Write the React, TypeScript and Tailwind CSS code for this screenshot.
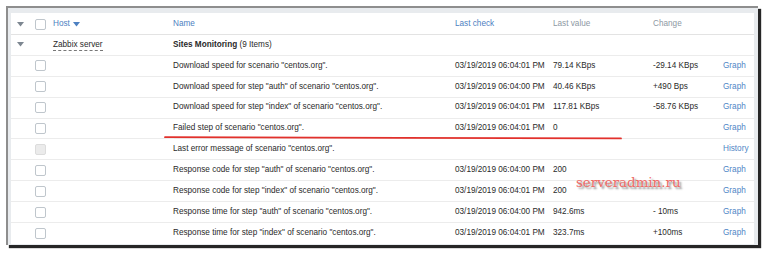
import React from "react";

const rows = [
  { name: 'Download speed for scenario "centos.org".', check: "03/19/2019 06:04:01 PM", value: "79.14 KBps", change: "-29.14 KBps", link: "Graph" },
  { name: 'Download speed for step "auth" of scenario "centos.org".', check: "03/19/2019 06:04:00 PM", value: "40.46 KBps", change: "+490 Bps", link: "Graph" },
  { name: 'Download speed for step "index" of scenario "centos.org".', check: "03/19/2019 06:04:01 PM", value: "117.81 KBps", change: "-58.76 KBps", link: "Graph" },
  { name: 'Failed step of scenario "centos.org".', check: "03/19/2019 06:04:01 PM", value: "0", change: "", link: "Graph" },
  { name: 'Last error message of scenario "centos.org".', check: "", value: "", change: "", link: "History", disabled: true },
  { name: 'Response code for step "auth" of scenario "centos.org".', check: "03/19/2019 06:04:00 PM", value: "200", change: "", link: "Graph" },
  { name: 'Response code for step "index" of scenario "centos.org".', check: "03/19/2019 06:04:01 PM", value: "200", change: "", link: "Graph" },
  { name: 'Response time for step "auth" of scenario "centos.org".', check: "03/19/2019 06:04:00 PM", value: "942.6ms", change: "- 10ms", link: "Graph" },
  { name: 'Response time for step "index" of scenario "centos.org".', check: "03/19/2019 06:04:01 PM", value: "323.7ms", change: "+100ms", link: "Graph" },
];

const grid = "grid grid-cols-[24px_18px_120px_282px_98px_100px_70px_1fr] items-center";

function Tri({ color = "#7d8791" }: { color?: string }) {
  return (
    <svg width="7" height="5" viewBox="0 0 7 5" className="block">
      <path d="M0 0 L7 0 L3.5 4.5 Z" fill={color} />
    </svg>
  );
}

function Box({ disabled }: { disabled?: boolean }) {
  return (
    <div
      className={`w-[11px] h-[11px] rounded-[2px] border ${
        disabled ? "bg-[#ebebeb] border-[#dcdcdc]" : "bg-white border-[#bfc6cc]"
      }`}
    />
  );
}

export default function App() {
  return (
    <div className="w-[768px] h-[255px] bg-white relative overflow-hidden font-['Liberation_Sans',Arial,sans-serif] text-[8.2px] text-[#2a2a2a]">
      <div className="ml-[6px] mt-[6px] w-[752px] border-l-[2px] border-t-[2px] border-[#8e8e8e] bg-[#e8ebee] pl-[3px] pt-[5px] pr-[4px] pb-[1px] shadow-[3px_3px_1px_rgba(0,0,0,0.85)]">
        <div className="bg-white">
          {/* header */}
          <div className={`${grid} h-[22px] pt-[2px] border-b border-[#e3e3e3]`}>
            <div className="pl-[6px]"><Tri /></div>
            <div><Box /></div>
            <div className="flex items-center gap-[3px] text-[#4d80c1]">
              <span>Host</span>
              <Tri color="#4d80c1" />
            </div>
            <div className="text-[#4d80c1]">Name</div>
            <div className="text-[#4d80c1]">Last check</div>
            <div className="text-[#8d98a3]">Last value</div>
            <div className="text-[#8d98a3]">Change</div>
            <div />
          </div>
          {/* group row */}
          <div className={`${grid} h-[20.9px] border-b border-[#ececec]`}>
            <div className="pl-[6px]"><Tri /></div>
            <div />
            <div>
              <span className="border-b border-dashed border-[#777] leading-[10px] inline-block">Zabbix server</span>
            </div>
            <div>
              <span className="font-bold">Sites Monitoring</span> (9 Items)
            </div>
            <div />
            <div />
            <div />
            <div />
          </div>
          {rows.map((r, i) => (
            <div
              key={i}
              className={`${grid} h-[20.9px] ${i < rows.length - 1 ? "border-b border-[#ececec]" : ""}`}
            >
              <div />
              <div><Box disabled={r.disabled} /></div>
              <div />
              <div className="whitespace-nowrap">{r.name}</div>
              <div className="whitespace-nowrap">{r.check}</div>
              <div className="whitespace-nowrap">{r.value}</div>
              <div className="whitespace-nowrap">{r.change}</div>
              <div className="text-[#4f86c6]">{r.link}</div>
            </div>
          ))}
        </div>
      </div>

      {/* red annotation line */}
      <svg className="absolute left-0 top-0 pointer-events-none" width="768" height="255">
        <path d="M165 137.2 L400 137.8 L621 138.4" stroke="#e2312c" strokeWidth="1.8" fill="none" strokeLinecap="round" />
      </svg>

      {/* watermark */}
      <div className="absolute left-[576px] top-[174px] font-['DejaVu_Serif',serif] text-[13.4px] leading-[17px] text-[#ef6a66] [text-shadow:2px_2px_2px_rgba(0,0,0,0.45)]">
        serveradmin.ru
      </div>
    </div>
  );
}
